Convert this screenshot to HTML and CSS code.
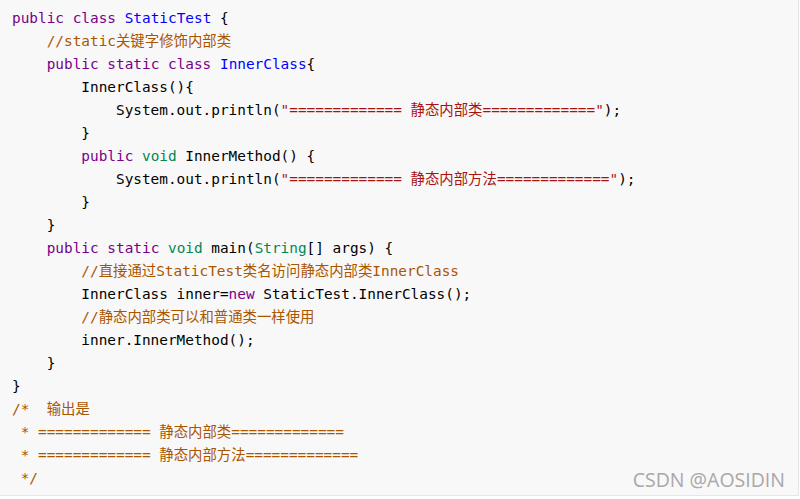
FILE: index.html
```html
<!DOCTYPE html>
<html>
<head>
<meta charset="utf-8">
<link rel="stylesheet" href="styles.css">
</head>
<body>
<div class="block">
<pre class="code"><span class="kw">public</span> <span class="kw">class</span> <span class="def">StaticTest</span> {
    <span class="cm">//static关键字修饰内部类</span>
    <span class="kw">public</span> <span class="kw">static</span> <span class="kw">class</span> <span class="def">InnerClass</span>{
        InnerClass(){
            System.out.println(<span class="str">"============= 静态内部类============="</span>);
        }
        <span class="kw">public</span> <span class="ty">void</span> <span class="def2">InnerMethod</span>() {
            System.out.println(<span class="str">"============= 静态内部方法============="</span>);
        }
    }
    <span class="kw">public</span> <span class="kw">static</span> <span class="ty">void</span> <span class="def2">main</span>(<span class="ty">String</span>[] args) {
        <span class="cm">//直接通过StaticTest类名访问静态内部类InnerClass</span>
        InnerClass inner=<span class="kw">new</span> StaticTest.InnerClass();
        <span class="cm">//静态内部类可以和普通类一样使用</span>
        inner.InnerMethod();
    }
}
<span class="cm">/*  输出是
 * ============= 静态内部类=============
 * ============= 静态内部方法=============
 */</span></pre>
<div class="mark">CSDN @AOSIDIN</div>
</div>
</body>
</html>
```

FILE: styles.css
```css
html, body {
  margin: 0;
  padding: 0;
  background: #ffffff;
}
.block {
  position: relative;
  width: 798px;
  height: 495px;
  background: #f8f8f8;
  border-right: 1px solid #e6e6e6;
  border-bottom: 1px solid #e6e6e6;
  box-sizing: content-box;
  overflow: hidden;
}
.code {
  margin: 0;
  padding: 7px 0 0 12px;
  font-family: "DejaVu Sans Mono", "Noto Sans CJK SC", monospace;
  font-size: 14.4px;
  line-height: 23px;
  color: #000000;
  white-space: pre;
}
.kw { color: #770088; }
.def { color: #0000ff; }
.def2 { color: #000000; }
.ty { color: #008855; }
.str { color: #aa1111; }
.cm { color: #aa5500; }
.mark {
  position: absolute;
  right: 13px;
  bottom: 2px;
  font-family: "Open Sans", "Liberation Sans", sans-serif;
  font-size: 19.5px;
  color: #a8a8a8;
  letter-spacing: 0;
}
```
